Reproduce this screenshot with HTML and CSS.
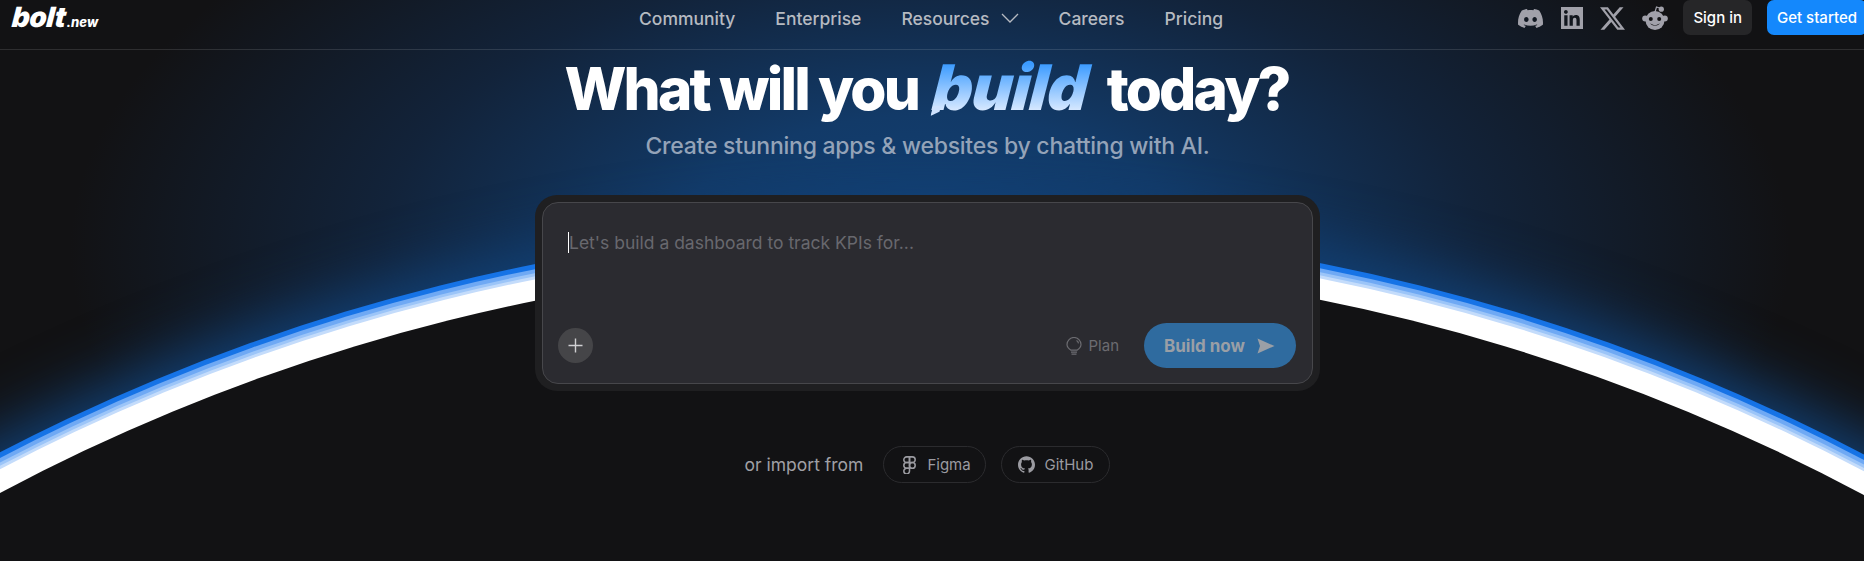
FILE: index.html
```html
<!DOCTYPE html>
<html lang="en">
<head>
  <meta charset="UTF-8">
  <title>bolt.new</title>
  <meta name="viewport" content="width=device-width, initial-scale=1.0">
  <link rel="stylesheet" href="styles.css">
</head>
<body>
  <div class="page">
    <div class="planet"></div>

    <header class="header">
      <a class="logo" href="#"><span class="logo-bolt">bolt</span><span class="logo-new">.new</span></a>
      <nav class="nav">
        <a href="#">Community</a>
        <a href="#">Enterprise</a>
        <a href="#" class="nav-drop">Resources
          <svg width="18" height="10" viewBox="0 0 18 10" fill="none" stroke="currentColor" stroke-width="1.3"><path d="M1 1l8 8 8-8"/></svg>
        </a>
        <a href="#">Careers</a>
        <a href="#">Pricing</a>
      </nav>
      <div class="header-right">
        <div class="socials">
          <svg class="icon-discord" viewBox="0 0 24 24"><path d="M20.317 4.3698a19.7913 19.7913 0 00-4.8851-1.5152.0741.0741 0 00-.0785.0371c-.211.3753-.4447.8648-.6083 1.2495-1.8447-.2762-3.68-.2762-5.4868 0-.1636-.3933-.4058-.8742-.6177-1.2495a.077.077 0 00-.0785-.037 19.7363 19.7363 0 00-4.8852 1.515.0699.0699 0 00-.0321.0277C.5334 9.0458-.319 13.5799.0992 18.0578a.0824.0824 0 00.0312.0561c2.0528 1.5076 4.0413 2.4228 5.9929 3.0294a.0777.0777 0 00.0842-.0276c.4616-.6304.8731-1.2952 1.226-1.9942a.076.076 0 00-.0416-.1057c-.6528-.2476-1.2743-.5495-1.8722-.8923a.077.077 0 01-.0076-.1277c.1258-.0943.2517-.1923.3718-.2914a.0743.0743 0 01.0776-.0105c3.9278 1.7933 8.18 1.7933 12.0614 0a.0739.0739 0 01.0785.0095c.1202.099.246.1981.3728.2924a.077.077 0 01-.0066.1276 12.2986 12.2986 0 01-1.873.8914.0766.0766 0 00-.0407.1067c.3604.698.7719 1.3628 1.225 1.9932a.076.076 0 00.0842.0286c1.961-.6067 3.9495-1.5219 6.0023-3.0294a.077.077 0 00.0313-.0552c.5004-5.177-.8382-9.6739-3.5485-13.6604a.061.061 0 00-.0312-.0286zM8.02 15.3312c-1.1825 0-2.1569-1.0857-2.1569-2.419 0-1.3332.9555-2.4189 2.157-2.4189 1.2108 0 2.1757 1.0952 2.1568 2.419 0 1.3332-.9555 2.4189-2.1569 2.4189zm7.9748 0c-1.1825 0-2.1569-1.0857-2.1569-2.419 0-1.3332.9554-2.4189 2.1569-2.4189 1.2108 0 2.1757 1.0952 2.1568 2.419 0 1.3332-.946 2.4189-2.1568 2.4189Z"/></svg>
          <svg class="icon-linkedin" viewBox="0 0 24 24"><path fill-rule="evenodd" d="M24 0H0v24h24zM20.447 20.452h-3.554v-5.569c0-1.328-.027-3.037-1.852-3.037-1.853 0-2.136 1.445-2.136 2.939v5.667H9.351V9h3.414v1.561h.046c.477-.9 1.637-1.85 3.37-1.85 3.601 0 4.267 2.37 4.267 5.455v6.286zM5.337 7.433c-1.144 0-2.063-.926-2.063-2.065 0-1.138.92-2.063 2.063-2.063 1.14 0 2.064.925 2.064 2.063 0 1.139-.925 2.065-2.064 2.065zm1.782 13.019H3.555V9h3.564v11.452z"/></svg>
          <svg class="icon-x" viewBox="0 0 24 24"><path d="M18.901 1.153h3.68l-8.04 9.19L24 22.846h-7.406l-5.8-7.584-6.638 7.584H.474l8.6-9.83L0 1.154h7.594l5.243 6.932ZM17.61 20.644h2.039L6.486 3.24H4.298Z"/></svg>
          <svg class="icon-reddit" viewBox="0 0 26 24">
            <circle cx="13" cy="14.5" r="9.5"/>
            <circle cx="3.2" cy="12.4" r="3"/>
            <circle cx="22.8" cy="12.4" r="3"/>
            <circle cx="19.3" cy="3.2" r="2.6"/>
            <path d="M13 6l1.5-5 4.5 1.5" fill="none" stroke="#a1a1aa" stroke-width="1.2"/>
            <circle class="reddit-face" cx="8.8" cy="13" r="2"/>
            <circle class="reddit-face" cx="17.2" cy="13" r="2"/>
            <path class="reddit-face" d="M8.2 17.2c3 2.4 6.6 2.4 9.6 0-1 3.2-8.6 3.2-9.6 0z"/>
          </svg>
        </div>
        <a class="btn-signin" href="#">Sign in</a>
        <a class="btn-start" href="#">Get started</a>
      </div>
    </header>

    <main class="main">
      <h1 class="title">What will you <span class="title-build">build</span> today?</h1>
      <p class="subtitle">Create stunning apps &amp; websites by chatting with AI.</p>

      <div class="prompt">
        <div class="prompt-inner">
          <div class="prompt-text"><span class="caret"></span>Let's build a dashboard to track KPIs for...</div>
          <div class="prompt-bar">
            <button class="btn-plus">
              <svg width="15" height="15" viewBox="0 0 15 15" stroke="currentColor" stroke-width="1.4"><path d="M7.5 0.5v14M0.5 7.5h14"/></svg>
            </button>
            <div class="prompt-actions">
              <span class="plan">
                <svg width="16" height="18" viewBox="0 0 16 18" fill="none" stroke="currentColor" stroke-width="1.2"><path d="M5 13.2C3.2 12 1 10.4 1 7.5a7 7 0 0 1 14 0c0 2.9-2.2 4.5-4 5.7z"/><path d="M5 15.2h6M5.5 17.2h5"/><path d="M10.5 3.5c1 .5 1.8 1.5 2 2.8"/></svg>
                Plan
              </span>
              <button class="btn-build">Build now
                <svg width="18" height="16" viewBox="0 0 18 16" fill="currentColor"><path d="M0.5 0.5L17.5 8 0.5 15.5 3 8z"/></svg>
              </button>
            </div>
          </div>
        </div>
      </div>

      <div class="import-row">
        <span class="import-label">or import from</span>
        <a class="import-btn import-figma" href="#">
          <svg width="13" height="18" viewBox="4 1.5 16 21" fill="none" stroke="currentColor" stroke-width="1.9"><path d="M5 5.5A3.5 3.5 0 0 1 8.5 2H12v7H8.5A3.5 3.5 0 0 1 5 5.5z"/><path d="M12 2h3.5a3.5 3.5 0 1 1 0 7H12V2z"/><path d="M12 12.5a3.5 3.5 0 1 1 7 0 3.5 3.5 0 1 1-7 0z"/><path d="M5 19.5A3.5 3.5 0 0 1 8.5 16H12v3.5a3.5 3.5 0 1 1-7 0z"/><path d="M5 12.5A3.5 3.5 0 0 1 8.5 9H12v7H8.5A3.5 3.5 0 0 1 5 12.5z"/></svg>
          Figma
        </a>
        <a class="import-btn import-github" href="#">
          <svg width="17" height="17" viewBox="0 0 24 24" fill="currentColor"><path d="M12 .297c-6.63 0-12 5.373-12 12 0 5.303 3.438 9.8 8.205 11.385.6.113.82-.258.82-.577 0-.285-.01-1.04-.015-2.04-3.338.724-4.042-1.61-4.042-1.61C4.422 18.07 3.633 17.7 3.633 17.7c-1.087-.744.084-.729.084-.729 1.205.084 1.838 1.236 1.838 1.236 1.07 1.835 2.809 1.305 3.495.998.108-.776.417-1.305.76-1.605-2.665-.3-5.466-1.332-5.466-5.93 0-1.31.465-2.38 1.235-3.22-.135-.303-.54-1.523.105-3.176 0 0 1.005-.322 3.3 1.23.96-.267 1.98-.399 3-.405 1.02.006 2.04.138 3 .405 2.28-1.552 3.285-1.23 3.285-1.23.645 1.653.24 2.873.12 3.176.765.84 1.23 1.91 1.23 3.22 0 4.61-2.805 5.625-5.475 5.92.42.36.81 1.096.81 2.22 0 1.606-.015 2.896-.015 3.286 0 .315.21.69.825.57C20.565 22.092 24 17.592 24 12.297c0-6.627-5.373-12-12-12"/></svg>
          GitHub
        </a>
      </div>
    </main>
  </div>
</body>
</html>
```

FILE: styles.css
```css
* {
  box-sizing: border-box;
}

body {
  margin: 0;
  background: #121214;
  font-family: Inter, "Liberation Sans", sans-serif;
  color: #ffffff;
}

a {
  color: inherit;
  text-decoration: none;
}

button {
  font-family: inherit;
  border: none;
  cursor: pointer;
}

.page {
  position: relative;
  height: 561px;
  overflow: hidden;
  background:
    radial-gradient(ellipse 860px 450px at 930px 250px, #124176 0%, #123a68 30%, #12233a 64%, rgba(18, 18, 20, 0) 100%),
    #121214;
}

/* the big circle behind the prompt, its rim is the lit horizon */
.planet {
  position: absolute;
  left: -1050px;
  top: 261px;
  width: 3960px;
  height: 3960px;
  border-radius: 50%;
  background: #121214;
  box-shadow:
    0 0 0 21px #ffffff,
    0 0 0 24px #c4dcfb,
    0 0 0 27px #9cc5f8,
    0 0 0 31px #6fa9f4,
    0 0 0 36px #1673e6,
    0 0 60px 50px #124176;
}

.header {
  position: relative;
  display: flex;
  align-items: flex-start;
  height: 50px;
  padding-left: 12px;
  border-bottom: 1px solid rgba(255, 255, 255, 0.12);
}

.logo {
  width: 90px;
  margin-top: 2px;
  font-style: italic;
  white-space: nowrap;
  line-height: 30px;
}

.logo-bolt {
  display: inline-block;
  font-size: 28px;
  font-weight: 900;
  letter-spacing: -0.5px;
  transform: skewX(-5deg);
}

.logo-new {
  margin-left: 1px;
  font-size: 13px;
  font-weight: 800;
}

.nav {
  display: flex;
  align-items: center;
  gap: 40px;
  height: 36px;
  margin-left: 537px;
  font-size: 17.5px;
  font-weight: 500;
  color: #b6bac1;
}

.nav-drop {
  display: flex;
  align-items: center;
  gap: 11px;
}

.header-right {
  display: flex;
  align-items: flex-start;
  margin-left: auto;
  margin-right: -3px;
  flex-shrink: 0;
}

.socials {
  display: flex;
  align-items: center;
  height: 36px;
  fill: #a1a1aa;
  margin-right: 15px;
}

.socials svg {
  display: block;
}

.icon-discord {
  width: 25px;
  height: 25px;
  margin-right: 18px;
}

.icon-linkedin {
  width: 22px;
  height: 22px;
  margin-right: 17px;
}

.icon-x {
  width: 25px;
  height: 25px;
  margin-right: 17px;
}

.icon-reddit {
  width: 26px;
  height: 24px;
}

.reddit-face {
  fill: #121214;
}

.btn-signin,
.btn-start {
  display: flex;
  align-items: center;
  height: 35px;
  font-size: 15px;
  font-weight: 500;
  border-radius: 7px;
  white-space: nowrap;
}

.btn-signin {
  padding: 0 10px;
  background: #262628;
}

.btn-start {
  margin-left: 15px;
  padding: 0 10px;
  background: #1488fc;
}

.main {
  position: relative;
  width: 1855px;
  display: flex;
  flex-direction: column;
  align-items: center;
}

.title {
  margin: 1px 0 0;
  font-size: 58.5px;
  line-height: 72px;
  font-weight: 800;
  letter-spacing: -2.8px;
  white-space: nowrap;
  transform: translateX(-1px);
}

.title-build {
  position: relative;
  display: inline-block;
  margin: 0 3px 0 5px;
  padding-right: 6px;
  font-size: 63px;
  font-style: italic;
  font-weight: 900;
  letter-spacing: -1px;
  background: linear-gradient(to bottom, #3b9bff 18%, #d6e8ff 82%);
  -webkit-background-clip: text;
  background-clip: text;
  color: transparent;
  transform: skewX(-5deg);
}

/* little spark tail under the b */
.title-build::before {
  content: "";
  position: absolute;
  left: 0;
  bottom: 7px;
  width: 9px;
  height: 10px;
  background: #cfe2fd;
  clip-path: polygon(20% 0, 100% 0, 100% 55%, 0 100%);
}

.subtitle {
  margin: 5px 0 0;
  font-size: 23px;
  line-height: 32px;
  font-weight: 500;
  letter-spacing: -0.25px;
  color: #94a3b8;
}

.prompt {
  width: 785px;
  margin-top: 33px;
  padding: 7px;
  background: #1f1f21;
  border-radius: 22px;
}

.prompt-inner {
  display: flex;
  flex-direction: column;
  justify-content: space-between;
  height: 182px;
  padding: 25px 15px 15px;
  background: #2b2b30;
  border: 1px solid #47474b;
  border-radius: 16px;
}

.prompt-text {
  display: flex;
  align-items: center;
  height: 28px;
  padding-left: 10px;
  font-size: 17.5px;
  color: #68686e;
}

.caret {
  width: 1px;
  height: 21px;
  margin-right: 0;
  background: #ffffff;
}

.prompt-bar {
  display: flex;
  justify-content: space-between;
  align-items: center;
}

.btn-plus {
  display: flex;
  align-items: center;
  justify-content: center;
  width: 35px;
  height: 35px;
  padding: 0;
  background: #454548;
  color: #d0d0d2;
  border-radius: 50%;
}

.prompt-actions {
  display: flex;
  align-items: center;
  gap: 25px;
  margin-right: 1px;
}

.plan {
  display: flex;
  align-items: center;
  gap: 7px;
  font-size: 15px;
  color: #6c6c71;
}

.btn-build {
  display: flex;
  align-items: center;
  gap: 12px;
  width: 152px;
  height: 45px;
  padding: 0 0 0 20px;
  background: #2f6b9f;
  color: #9a9fa6;
  font-size: 17px;
  font-weight: 700;
  border-radius: 23px;
}

.import-row {
  display: flex;
  align-items: center;
  margin-top: 55px;
  gap: 15px;
}

.import-label {
  margin-right: 5px;
  font-size: 17.5px;
  color: #a0a0a6;
}

.import-btn {
  display: flex;
  align-items: center;
  height: 37px;
  border: 1px solid #2b2b2e;
  border-radius: 19px;
  font-size: 15px;
  color: #9b9ba1;
}

.import-figma {
  width: 103px;
  gap: 11px;
  padding-left: 19px;
}

.import-github {
  width: 109px;
  gap: 9px;
  padding-left: 16px;
}
```
